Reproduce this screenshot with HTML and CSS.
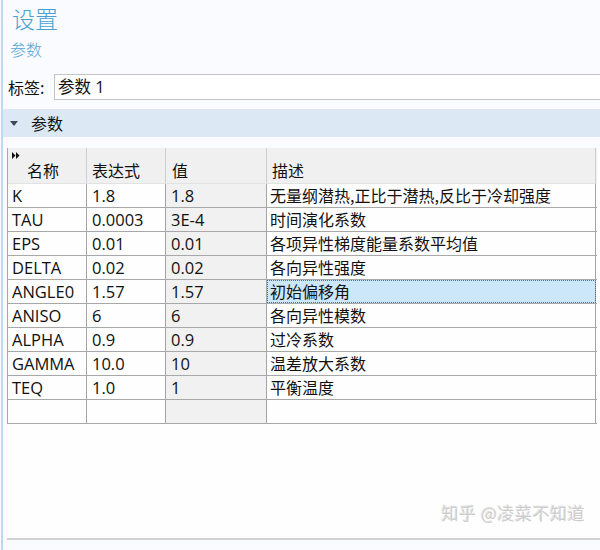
FILE: index.html
```html
<!DOCTYPE html>
<html lang="zh">
<head>
<meta charset="utf-8">
<title>设置 - 参数</title>
<link rel="stylesheet" href="styles.css">
</head>
<body>
<div class="app">
  <header class="head">
    <div class="title">设置</div>
    <div class="subtitle">参数</div>
  </header>
  <div class="label-row">
    <span class="label">标签:</span>
    <div class="input">参数 1</div>
  </div>
  <div class="section">
    <span class="tri"></span>
    <span class="section-name">参数</span>
  </div>
  <div class="tablewrap">
    <div class="grid" role="table">
      <div class="row hdr" role="row">
        <div class="cell c1" role="columnheader">
          <svg class="expand" width="8" height="7" viewBox="0 0 8 7"><path d="M0 0 L3.5 3.5 L0 7 Z M4 0 L7.5 3.5 L4 7 Z" fill="#111"/></svg>
          名称
        </div>
        <div class="cell c2" role="columnheader">表达式</div>
        <div class="cell c3" role="columnheader">值</div>
        <div class="cell c4" role="columnheader">描述</div>
      </div>
      <div class="row" role="row"><div class="cell c1">K</div><div class="cell c2">1.8</div><div class="cell c3 ro">1.8</div><div class="cell c4">无量纲潜热,正比于潜热,反比于冷却强度</div></div>
      <div class="row" role="row"><div class="cell c1">TAU</div><div class="cell c2">0.0003</div><div class="cell c3 ro">3E-4</div><div class="cell c4">时间演化系数</div></div>
      <div class="row" role="row"><div class="cell c1">EPS</div><div class="cell c2">0.01</div><div class="cell c3 ro">0.01</div><div class="cell c4">各项异性梯度能量系数平均值</div></div>
      <div class="row" role="row"><div class="cell c1">DELTA</div><div class="cell c2">0.02</div><div class="cell c3 ro">0.02</div><div class="cell c4">各向异性强度</div></div>
      <div class="row" role="row"><div class="cell c1">ANGLE0</div><div class="cell c2">1.57</div><div class="cell c3 ro">1.57</div><div class="cell c4 sel">初始偏移角</div></div>
      <div class="row" role="row"><div class="cell c1">ANISO</div><div class="cell c2">6</div><div class="cell c3 ro">6</div><div class="cell c4">各向异性模数</div></div>
      <div class="row" role="row"><div class="cell c1">ALPHA</div><div class="cell c2">0.9</div><div class="cell c3 ro">0.9</div><div class="cell c4">过冷系数</div></div>
      <div class="row" role="row"><div class="cell c1">GAMMA</div><div class="cell c2">10.0</div><div class="cell c3 ro">10</div><div class="cell c4">温差放大系数</div></div>
      <div class="row" role="row"><div class="cell c1">TEQ</div><div class="cell c2">1.0</div><div class="cell c3 ro">1</div><div class="cell c4">平衡温度</div></div>
      <div class="row" role="row"><div class="cell c1"></div><div class="cell c2"></div><div class="cell c3 ro"></div><div class="cell c4"></div></div>
    </div>
    <div class="watermark">知乎 @凌菜不知道</div>
  </div>
</div>
</body>
</html>
```

FILE: styles.css
```css
html, body {
  margin: 0;
  padding: 0;
  background: #f9fbfe;
}
body {
  width: 600px;
  height: 550px;
  overflow: hidden;
  font-family: "Open Sans", "Noto Sans CJK SC", sans-serif;
  font-size: 16.5px;
  color: #111;
}
.app {
  margin-left: 1px;
  border-left: 2px solid #b9dcf2;
  height: 550px;
  box-sizing: border-box;
}
.head {
  padding: 3px 0 0 9px;
  height: 74px;
  box-sizing: border-box;
}
.title {
  font-family: "Noto Sans CJK SC", sans-serif;
  font-size: 23px;
  line-height: 30px;
  color: #4a9fd3;
  font-weight: 300;
}
.subtitle {
  margin-top: 6px;
  margin-left: -2px;
  font-family: "Noto Sans CJK SC", sans-serif;
  font-size: 16px;
  line-height: 20px;
  color: #56a6d6;
  font-weight: 300;
}
.label-row {
  display: flex;
  align-items: center;
  height: 26px;
}
.label {
  width: 46px;
  padding-left: 5px;
  font-family: "Noto Sans CJK SC", sans-serif;
  font-size: 16px;
  line-height: 20px;
}
.input {
  flex: 1;
  height: 26px;
  box-sizing: border-box;
  background: #fff;
  border: 1px solid #c4c4c4;
  border-right: none;
  padding-left: 3px;
  line-height: 24px;
}
.section {
  margin-top: 9px;
  height: 28px;
  background: #dce8f4;
  display: flex;
  align-items: center;
}
.tri {
  width: 0;
  height: 0;
  margin-left: 7px;
  border-left: 4px solid transparent;
  border-right: 4px solid transparent;
  border-top: 5px solid #3e4852;
}
.section-name {
  margin-left: 13px;
  font-family: "Noto Sans CJK SC", sans-serif;
  font-size: 16px;
  line-height: 20px;
}
.tablewrap {
  position: relative;
  margin-top: 11px;
  margin-left: 4px;
  height: 392px;
  box-sizing: border-box;
  background: #fefefe;
  border-bottom: 2px solid #d2d2d2;
}
.grid {
  width: 589px;
  border-left: 1px solid #a8a8a8;
}
.row {
  display: grid;
  grid-template-columns: 79px 79px 101px 329px;
  height: 24px;
  box-sizing: border-box;
  border-bottom: 1px solid #a8a8a8;
}
.row.hdr {
  height: 36px;
  background: #f0f0f0;
  border-bottom: 1px solid #e2e2e2;
}
.cell {
  position: relative;
  border-right: 1px solid #a4a4a4;
  padding-left: 4px;
  line-height: 23px;
  white-space: nowrap;
  overflow: hidden;
}
.hdr .cell {
  display: flex;
  align-items: flex-end;
  padding-bottom: 3px;
  line-height: 20px;
  font-size: 16px;
  border-right-color: #cfcfcf;
  font-family: "Noto Sans CJK SC", sans-serif;
}
.hdr .c1 {
  padding-left: 19px;
}
.hdr .c2 { padding-left: 5px; }
.hdr .c3 { padding-left: 6px; }
.hdr .c4 { padding-left: 5px; }
.expand {
  position: absolute;
  left: 4px;
  top: 4px;
}
.c2, .c3 { padding-left: 5px; }
.c4 {
  padding-left: 3px;
  font-family: "Noto Sans CJK SC", sans-serif;
  font-size: 16px;
  line-height: 23px;
}
.ro {
  background: #f1f1f1;
}
.sel {
  background: #cce6fa;
  outline: 1px dotted #4b6f90;
  outline-offset: -1px;
}
.watermark {
  position: absolute;
  right: 15px;
  bottom: 13px;
  font-family: "Noto Sans CJK SC", sans-serif;
  font-size: 17px;
  color: #cdcdcd;
  text-shadow: 1px 1px 0 #ffffff, -1px -1px 0 #e4e4e4;
  letter-spacing: 0.5px;
}
```
